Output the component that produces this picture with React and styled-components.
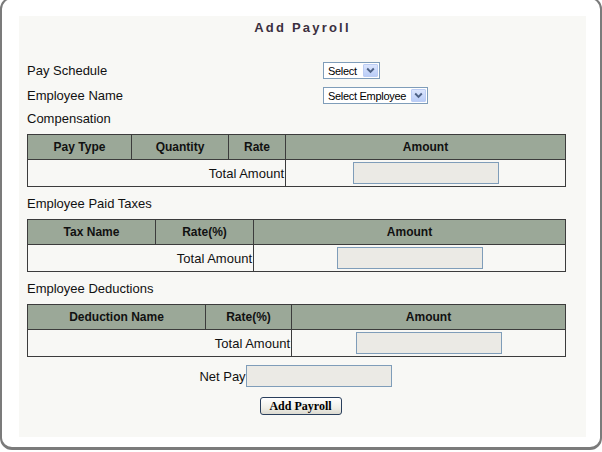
import React from 'react'
import styled, { createGlobalStyle } from 'styled-components'

const GlobalStyle = createGlobalStyle`
  html, body {
    margin: 0;
    padding: 0;
    background: #ffffff;
    overflow: hidden;
  }
  body {
    font-family: "Liberation Sans", Arial, sans-serif;
    font-size: 13px;
    color: #111;
  }
`

const Frame = styled.div`
  box-sizing: border-box;
  width: 602px;
  height: 453px;
  margin-top: -3px;
  border: 2px solid #7b7b7b;
  border-bottom-width: 3px;
  border-radius: 12px;
  padding: 17px 14px 0 17px;
  background: #ffffff;
`

const Panel = styled.div`
  box-sizing: border-box;
  height: 421px;
  background: #f8f8f5;
  padding: 0 20px 0 8px;
  display: flex;
  flex-direction: column;
`

const Title = styled.h2`
  margin: 0 0 20px;
  padding-left: 12px;
  height: 22px;
  line-height: 24px;
  text-align: center;
  font-size: 13px;
  font-weight: bold;
  letter-spacing: 2.2px;
  color: #3b3040;
`

const FieldRow = styled.div`
  display: flex;
  align-items: center;
  height: 25px;
`

const FieldLabel = styled.span`
  width: 296px;
`

const SelectBox = styled.span`
  box-sizing: border-box;
  display: inline-flex;
  align-items: center;
  justify-content: space-between;
  height: 17px;
  width: ${p => p.$width}px;
  border: 1px solid #7f9db9;
  background: #fff;
  padding: 0 1px 0 4px;
  font-size: 11px;
  letter-spacing: -0.3px;
  color: #000;
`

const DropButton = styled.span`
  box-sizing: border-box;
  display: inline-flex;
  align-items: center;
  justify-content: center;
  width: 15px;
  height: 13px;
  border: 1px solid #bccdf4;
  border-radius: 1px;
  background: linear-gradient(#dbe5fd, #bacdf7);
`

const SectionLabel = styled.div`
  height: 22px;
  line-height: 22px;
  margin: ${p => (p.$first ? '0' : '6px')} 0 4px;
`

const Table = styled.table`
  width: 538px;
  border-collapse: collapse;
  table-layout: fixed;
  border: 1px solid #3c3c3c;
`

const HeadCell = styled.th`
  height: 24px;
  padding: 0;
  background: #9ba898;
  border: 1px solid #3c3c3c;
  font-size: 12px;
  font-weight: bold;
  color: #111;
  text-align: center;
`

const TotalCell = styled.td`
  height: 26px;
  padding: 0 1px 0 0;
  border: 1px solid #3c3c3c;
  text-align: right;
  font-size: 13px;
`

const AmountCell = styled.td`
  height: 26px;
  padding: 0;
  border: 1px solid #3c3c3c;
  text-align: center;
`

const ReadField = styled.input`
  box-sizing: border-box;
  width: 146px;
  height: 22px;
  margin: 0;
  vertical-align: middle;
  border: 1px solid #7f9db9;
  background: #ebeae5;
  font-family: inherit;
`

const NetRow = styled.div`
  display: flex;
  justify-content: center;
  align-items: center;
  margin-top: 8px;
  height: 22px;
  padding-right: 2px;
`

const ButtonRow = styled.div`
  display: flex;
  justify-content: center;
  margin-top: 10px;
  padding-left: 8px;
`

const SubmitButton = styled.button`
  box-sizing: border-box;
  width: 82px;
  height: 18px;
  padding: 0;
  border: 1px solid #2a3f5c;
  border-radius: 3px;
  background: linear-gradient(#ffffff, #f0efe8 60%, #dcdad0);
  font-family: "Liberation Serif", "Times New Roman", serif;
  font-size: 12px;
  font-weight: bold;
  color: #000;
`

const Chevron = () => (
  <svg width="9" height="7" viewBox="0 0 9 7">
    <path d="M1.2 1.5 L4.5 4.8 L7.8 1.5" fill="none" stroke="#4d6185" strokeWidth="1.9" />
  </svg>
)

const Select = ({ width, children }) => (
  <SelectBox $width={width}>
    {children}
    <DropButton>
      <Chevron />
    </DropButton>
  </SelectBox>
)

const PayTable = ({ columns }) => (
  <Table>
    <colgroup>
      {columns.map(c => (
        <col key={c.name} style={{ width: c.width }} />
      ))}
    </colgroup>
    <thead>
      <tr>
        {columns.map(c => (
          <HeadCell key={c.name}>{c.name}</HeadCell>
        ))}
      </tr>
    </thead>
    <tbody>
      <tr>
        <TotalCell colSpan={columns.length - 1}>Total Amount</TotalCell>
        <AmountCell>
          <ReadField readOnly />
        </AmountCell>
      </tr>
    </tbody>
  </Table>
)

const compensation = [
  { name: 'Pay Type', width: 104 },
  { name: 'Quantity', width: 97 },
  { name: 'Rate', width: 57 },
  { name: 'Amount', width: 280 },
]

const taxes = [
  { name: 'Tax Name', width: 128 },
  { name: 'Rate(%)', width: 98 },
  { name: 'Amount', width: 312 },
]

const deductions = [
  { name: 'Deduction Name', width: 178 },
  { name: 'Rate(%)', width: 86 },
  { name: 'Amount', width: 274 },
]

const App = () => {
  return (
    <>
      <GlobalStyle />
      <Frame>
        <Panel>
          <Title>Add Payroll</Title>
          <FieldRow>
            <FieldLabel>Pay Schedule</FieldLabel>
            <Select width={57}>Select</Select>
          </FieldRow>
          <FieldRow>
            <FieldLabel>Employee Name</FieldLabel>
            <Select width={105}>Select Employee</Select>
          </FieldRow>
          <SectionLabel $first>Compensation</SectionLabel>
          <PayTable columns={compensation} />
          <SectionLabel>Employee Paid Taxes</SectionLabel>
          <PayTable columns={taxes} />
          <SectionLabel>Employee Deductions</SectionLabel>
          <PayTable columns={deductions} />
          <NetRow>
            Net Pay
            <ReadField readOnly />
          </NetRow>
          <ButtonRow>
            <SubmitButton>Add Payroll</SubmitButton>
          </ButtonRow>
        </Panel>
      </Frame>
    </>
  )
}

export default App
